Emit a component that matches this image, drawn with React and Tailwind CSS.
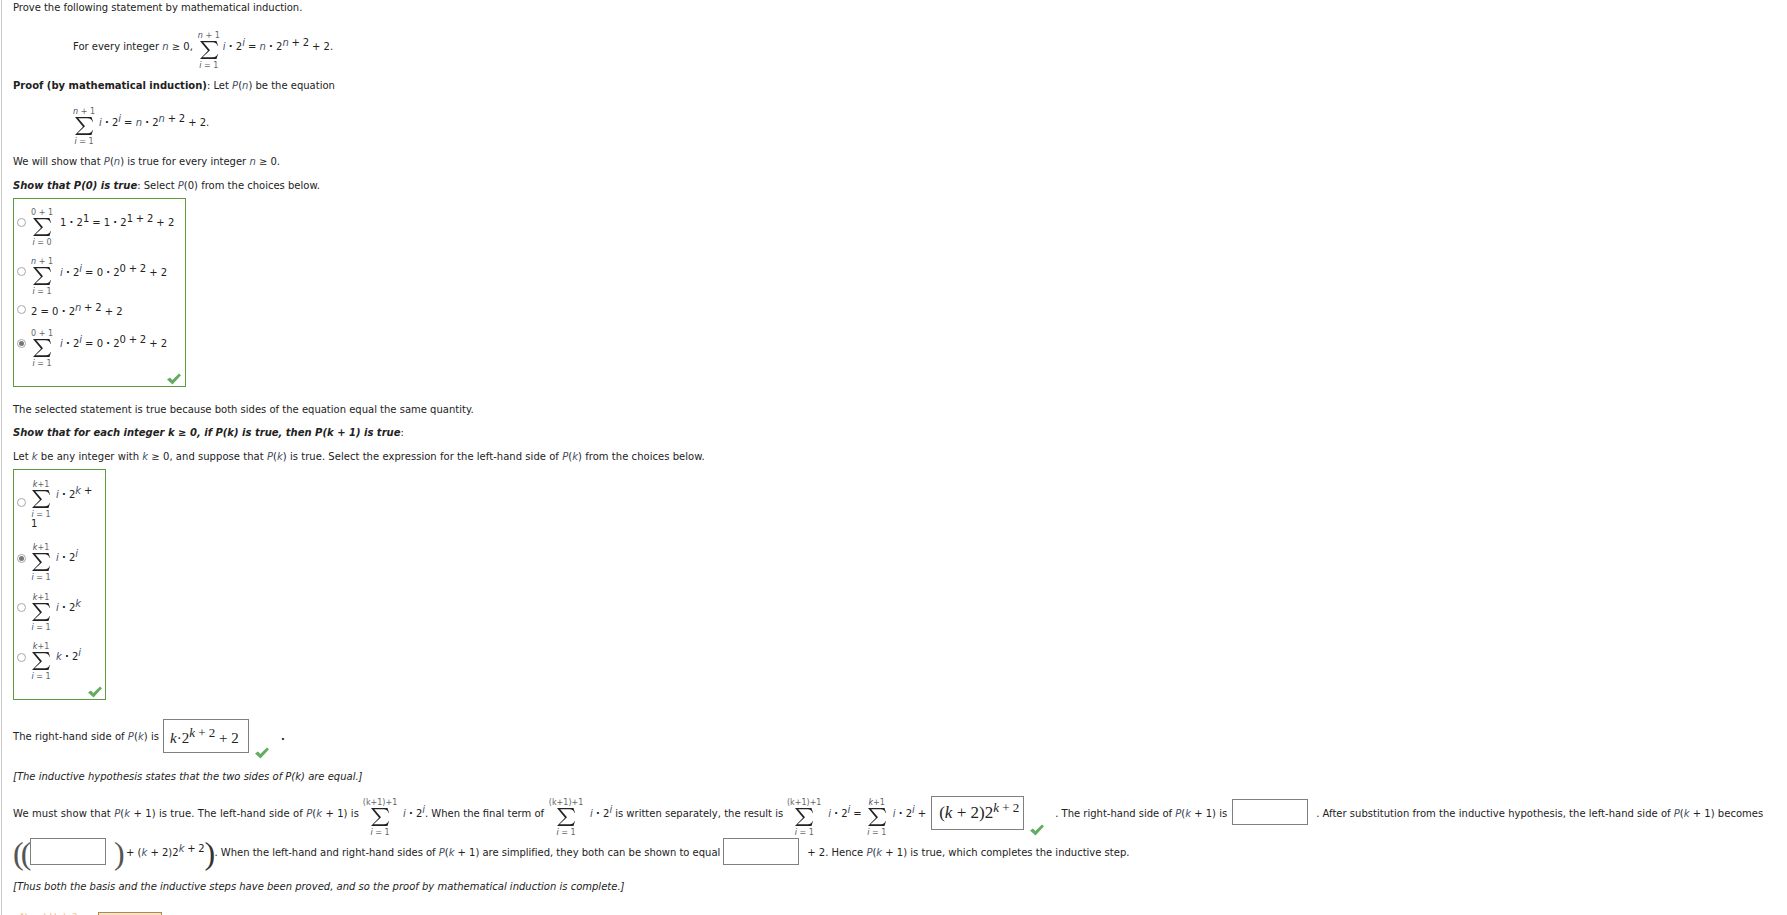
const V = ({ children }) => <i className="text-[#44506a]">{children}</i>;
const S = ({ children }) => <span className="align-[4px] leading-[0] text-[10px] tracking-[-0.2px]">{children}</span>;
const Dot = () => <b>·</b>;

const Sigma = () => (
  <svg width="18" height="18" viewBox="0 0 18 18" className="block">
    <path
      d="M0 0H16.5L18 4.8H17.4C16.8 2.6 15.4 1.2 12.5 1.2H3.2L10 9.2L2.6 16.2H13C15.6 16.2 17 15 17.6 13H18L16.5 18H0L8 9.8Z"
      fill="#222"
    />
  </svg>
);

const Sum = ({ up, low = "i = 1", w = "w-[22px]", cls = "" }) => (
  <span className={`inline-flex flex-col items-center shrink-0 ${w} ${cls}`}>
    <span className="h-[10px] text-[8px] leading-[10px] text-[#666] whitespace-nowrap">{up}</span>
    <Sigma />
    <span className="h-[10px] pt-[2px] text-[8px] leading-[10px] text-[#666] whitespace-nowrap">{low}</span>
  </span>
);

const Radio = ({ on, cls = "" }) => (
  <span
    className={`shrink-0 w-[9px] h-[9px] rounded-full border border-[#a8a8a8] flex items-center justify-center ${cls}`}
  >
    {on && <span className="w-[5px] h-[5px] rounded-full bg-[#777]" />}
  </span>
);

const Check = ({ cls = "" }) => (
  <svg width="16" height="14" viewBox="0 0 16 14" className={`shrink-0 ${cls}`}>
    <path d="M1 7.5L4 5.5L6.3 8L13 1.5L15 3.2L6.5 12.5Z" fill="#64ac62" />
  </svg>
);

const Ibox = ({ cls = "", children }) => (
  <span className={`shrink-0 border border-[#808080] bg-white flex ${cls}`}>{children}</span>
);

const T = ({ cls = "", children }) => <span className={`block shrink-0 ${cls}`}>{children}</span>;

const M = ({ children }) => (
  <span className="font-['Liberation_Serif',serif] text-[#222]">{children}</span>
);

export default function App() {
  return (
    <div className="ml-px border-l border-[#ccc] pl-[11px] h-[915px] overflow-hidden bg-white text-[#222] text-[10px] leading-4 whitespace-nowrap font-['DejaVu_Sans','Liberation_Sans',sans-serif]">
      <T cls="tracking-[-0.03px]">Prove the following statement by mathematical induction.</T>

      <div className="flex items-start mt-[15px] pl-[60px]">
        <T cls="mt-[8px]">
          For every integer <V>n</V> ≥ 0,
        </T>
        <Sum up={<><V>n</V> + 1</>} cls="ml-[4px]" w="w-[24px]" low={<><V>i</V> = 1</>} />
        <T cls="mt-[8px] ml-[2px]">
          <V>i</V> <Dot /> 2<S><V>i</V></S> = <V>n</V> <Dot /> 2<S><V>n</V> + 2</S> + 2.
        </T>
      </div>

      <T cls="mt-[9px]">
        <b className="font-bold">Proof (by mathematical induction)</b>: Let <V>P</V>(<V>n</V>) be the equation
      </T>

      <div className="flex items-start mt-[13px] pl-[60px]">
        <Sum up={<><V>n</V> + 1</>} low={<><V>i</V> = 1</>} w="w-[22px]" />
        <T cls="mt-[8px] ml-[4px]">
          <V>i</V> <Dot /> 2<S><V>i</V></S> = <V>n</V> <Dot /> 2<S><V>n</V> + 2</S> + 2.
        </T>
      </div>

      <T cls="mt-[9px]">
        We will show that <V>P</V>(<V>n</V>) is true for every integer <V>n</V> ≥ 0.
      </T>
      <T cls="mt-[8px]">
        <b><i>Show that P(0) is true</i></b>: Select <V>P</V>(0) from the choices below.
      </T>

      <div className="mt-[4px] w-[173px] h-[189px] border border-[#5d9c3c] pl-[3px] pt-[9px]">
        <div className="flex items-start">
          <Radio cls="mt-[10px]" />
          <Sum up="0 + 1" low={<><V>i</V> = 0</>} cls="ml-[5px]" />
          <T cls="mt-[7px] ml-[7px]">
            1 <Dot /> 2<S>1</S> = 1 <Dot /> 2<S>1 + 2</S> + 2
          </T>
        </div>
        <div className="flex items-start mt-[11px]">
          <Radio cls="mt-[10px]" />
          <Sum up={<><V>n</V> + 1</>} low={<><V>i</V> = 1</>} cls="ml-[5px]" />
          <T cls="mt-[8px] ml-[7px]">
            <V>i</V> <Dot /> 2<S><V>i</V></S> = 0 <Dot /> 2<S>0 + 2</S> + 2
          </T>
        </div>
        <div className="flex items-start mt-[9px]">
          <Radio cls="mt-[1px]" />
          <T cls="ml-[5px]">
            2 = 0 <Dot /> 2<S><V>n</V> + 2</S> + 2
          </T>
        </div>
        <div className="flex items-start mt-[9px]">
          <Radio on cls="mt-[10px]" />
          <Sum up="0 + 1" low={<><V>i</V> = 1</>} cls="ml-[5px]" />
          <T cls="mt-[7px] ml-[7px]">
            <V>i</V> <Dot /> 2<S><V>i</V></S> = 0 <Dot /> 2<S>0 + 2</S> + 2
          </T>
        </div>
        <div className="flex justify-end pr-[3px] mt-[5px]">
          <Check />
        </div>
      </div>

      <T cls="mt-[15px]">The selected statement is true because both sides of the equation equal the same quantity.</T>
      <T cls="mt-[7px]">
        <b><i>Show that for each integer k ≥ 0, if P(k) is true, then P(k + 1) is true</i></b>:
      </T>
      <T cls="mt-[8px] tracking-[0.04px]">
        Let <V>k</V> be any integer with <V>k</V> ≥ 0, and suppose that <V>P</V>(<V>k</V>) is true. Select the expression for the left-hand side of <V>P</V>(<V>k</V>) from the choices below.
      </T>

      <div className="mt-[4px] w-[93px] h-[231px] border border-[#5d9c3c] pl-[3px] pt-[10px]">
        <div className="flex items-start">
          <Radio cls="mt-[18px]" />
          <Sum up={<><V>k</V>+1</>} low={<><V>i</V> = 1</>} cls="ml-[4px]" />
          <T cls="mt-[7px] ml-[4px]">
            <V>i</V> <Dot /> 2<S><V>k</V> +</S>
          </T>
        </div>
        <T cls="ml-[14px] mt-[-2px]">1</T>
        <div className="flex items-start mt-[11px]">
          <Radio on cls="mt-[11px]" />
          <Sum up={<><V>k</V>+1</>} low={<><V>i</V> = 1</>} cls="ml-[4px]" />
          <T cls="mt-[7px] ml-[4px]">
            <V>i</V> <Dot /> 2<S><V>i</V></S>
          </T>
        </div>
        <div className="flex items-start mt-[12px]">
          <Radio cls="mt-[10px]" />
          <Sum up={<><V>k</V>+1</>} low={<><V>i</V> = 1</>} cls="ml-[4px]" />
          <T cls="mt-[7px] ml-[4px]">
            <V>i</V> <Dot /> 2<S><V>k</V></S>
          </T>
        </div>
        <div className="flex items-start mt-[11px]">
          <Radio cls="mt-[11px]" />
          <Sum up={<><V>k</V>+1</>} low={<><V>i</V> = 1</>} cls="ml-[4px]" />
          <T cls="mt-[7px] ml-[4px]">
            <V>k</V> <Dot /> 2<S><V>i</V></S>
          </T>
        </div>
        <div className="flex justify-end pr-[2px] mt-[5px]">
          <Check />
        </div>
      </div>

      <div className="flex items-start mt-[19px] h-[34px]">
        <T cls="mt-[10px] tracking-[0.05px]">
          The right-hand side of <V>P</V>(<V>k</V>) is
        </T>
        <Ibox cls="ml-[4px] w-[86px] h-[34px] items-center pl-[6px] pt-[3px] text-[15px]">
          <M>
            <i>k</i>·2<span className="align-[6px] leading-[0] text-[13px]"><i>k</i> + 2</span> + 2
          </M>
        </Ibox>
        <Check cls="ml-[5px] mt-[27px]" />
        <T cls="mt-[10px] ml-[11px] font-bold">.</T>
      </div>

      <T cls="mt-[16px] italic">[The inductive hypothesis states that the two sides of P(k) are equal.]</T>

      <div className="flex items-start mt-[11px] h-[34px]">
        <T cls="mt-[10px] tracking-[0.09px]">
          We must show that <V>P</V>(<V>k</V> + 1) is true. The left-hand side of <V>P</V>(<V>k</V> + 1) is
        </T>
        <Sum up="(k+1)+1" low={<><V>i</V> = 1</>} cls="ml-[10px] mt-[2px]" />
        <T cls="mt-[10px] ml-[12px]">
          <V>i</V> <Dot /> 2<S><V>i</V></S>. When the final term of
        </T>
        <Sum up="(k+1)+1" low={<><V>i</V> = 1</>} cls="ml-[11px] mt-[2px]" />
        <T cls="mt-[10px] ml-[13px]">
          <V>i</V> <Dot /> 2<S><V>i</V></S> is written separately, the result is
        </T>
        <Sum up="(k+1)+1" low={<><V>i</V> = 1</>} cls="ml-[10px] mt-[2px]" />
        <T cls="mt-[10px] ml-[13px]">
          <V>i</V> <Dot /> 2<S><V>i</V></S> =
        </T>
        <Sum up={<><V>k</V>+1</>} low={<><V>i</V> = 1</>} cls="ml-[4px] mt-[2px]" />
        <T cls="mt-[10px] ml-[5px]">
          <V>i</V> <Dot /> 2<S><V>i</V></S> +
        </T>
        <Ibox cls="ml-[5px] w-[93px] h-[34px] items-center pl-[7px] text-[17px]">
          <M>
            (<i>k</i> + 2)2<span className="align-[6px] leading-[0] text-[13px]"><i>k</i> + 2</span>
          </M>
        </Ibox>
        <Check cls="ml-[5px] mt-[27px]" />
        <T cls="mt-[10px] ml-[10px]">
          . The right-hand side of <V>P</V>(<V>k</V> + 1) is
        </T>
        <Ibox cls="ml-[5px] mt-[3px] w-[76px] h-[26px]" />
        <T cls="mt-[10px] ml-[8px] tracking-[0.02px]">
          . After substitution from the inductive hypothesis, the left-hand side of <V>P</V>(<V>k</V> + 1) becomes
        </T>
      </div>

      <div className="flex items-start mt-[8px] h-[27px]">
        <span className="font-['Liberation_Serif',serif] text-[32px] leading-[30px] text-[#555] w-[17px] tracking-[-3px]">((</span>
        <Ibox cls="w-[76px] h-[27px]" />
        <span className="font-['Liberation_Serif',serif] text-[32px] leading-[30px] text-[#555] ml-[8px] w-[12px]">)</span>
        <T cls="mt-[7px]">
          + (<V>k</V> + 2)2<S><V>k</V> + 2</S>
        </T>
        <span className="font-['Liberation_Serif',serif] text-[32px] leading-[30px] text-[#333] w-[10px]">)</span>
        <T cls="mt-[7px] tracking-[-0.02px]">
          . When the left-hand and right-hand sides of <V>P</V>(<V>k</V> + 1) are simplified, they both can be shown to equal
        </T>
        <Ibox cls="ml-[3px] w-[76px] h-[27px]" />
        <T cls="mt-[7px] ml-[8px]">
          + 2. Hence <V>P</V>(<V>k</V> + 1) is true, which completes the inductive step.
        </T>
      </div>

      <T cls="mt-[14px] italic">[Thus both the basis and the inductive steps have been proved, and so the proof by mathematical induction is complete.]</T>

      <div className="flex items-start mt-[17px]">
        <span className="w-[78px] ml-[7px] mt-[-2px] text-[#f0c898]">Need Help?</span>
        <span className="w-[64px] h-[30px] border border-[#b5864a] bg-[#f6e2c8]" />
      </div>
    </div>
  );
}
